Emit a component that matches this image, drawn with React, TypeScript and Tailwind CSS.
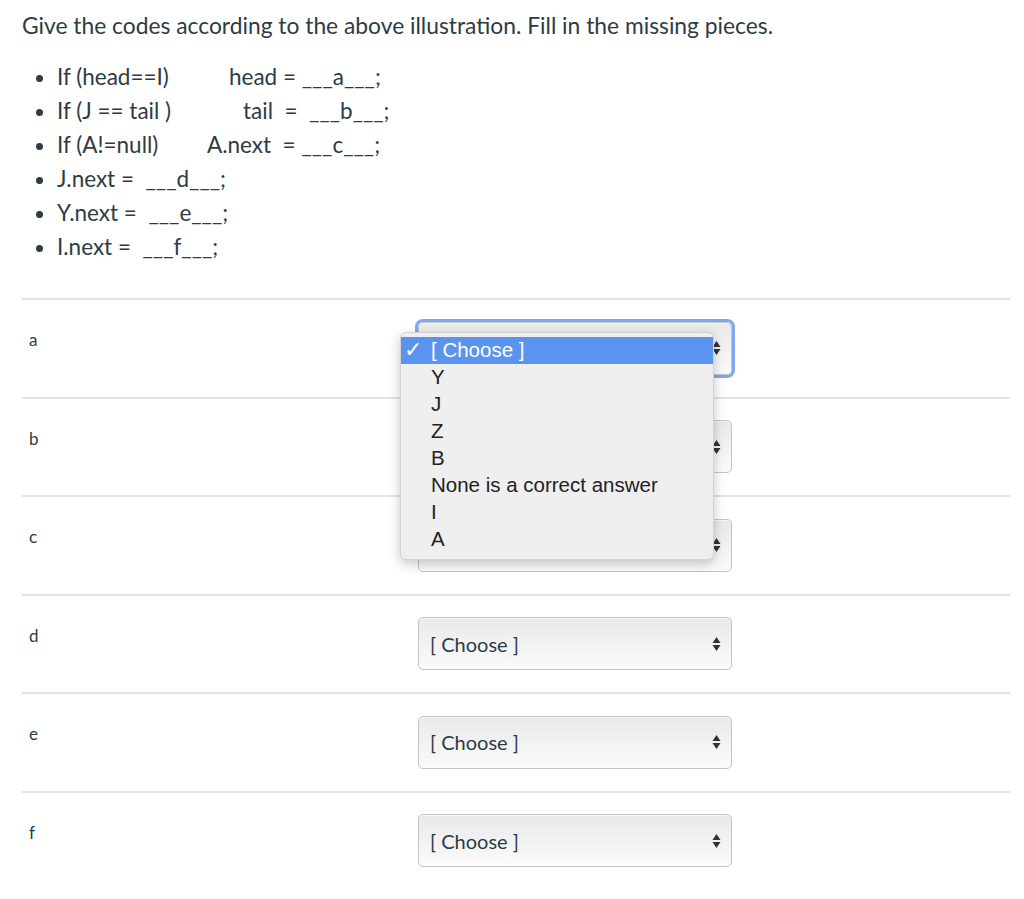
import React from "react";

const lato = { fontFamily: "Lato, 'Open Sans', sans-serif" };

const rows = ["a", "b", "c", "d", "e", "f"];

const options = ["Y", "J", "Z", "B", "None is a correct answer", "I", "A"];

const Arrows: React.FC = () => (
  <svg width="9" height="16" viewBox="0 0 9 16" className="shrink-0">
    <path d="M4.5 1 L8.5 7 L0.5 7 Z" fill="#2f3338" />
    <path d="M4.5 15 L8.5 9 L0.5 9 Z" fill="#2f3338" />
  </svg>
);

const Select: React.FC<{ focused?: boolean }> = ({ focused }) => (
  <div
    className={
      "w-[314px] h-[53px] rounded-[5px] border border-[#c4c4c4] bg-gradient-to-b from-[#e9e9e9] to-[#fbfbfb] flex items-center justify-between pl-[11px] pr-[10px] shadow-[inset_0_1px_0_#f7f7f7] " +
      (focused ? "ring-[3px] ring-[#7ea9ee]" : "")
    }
  >
    <span className="text-[20px] text-[#2d3b45]" style={lato}>
      [ Choose ]
    </span>
    <Arrows />
  </div>
);

const Dropdown: React.FC = () => (
  <div
    className="absolute left-[-18px] top-[10px] w-[314px] rounded-[6px] bg-[#efefef] border border-[#d3d3d3] shadow-[0_4px_12px_rgba(0,0,0,0.22)] pt-[4px] pb-[6px] z-10"
    style={{ fontFamily: "'Liberation Sans', 'DejaVu Sans', sans-serif" }}
  >
    <div className="h-[27px] bg-[#5a94ee] flex items-center text-white text-[20.5px]">
      <span className="w-[30px] pl-[3px] text-[22px] leading-none" style={{ fontFamily: "'DejaVu Sans', sans-serif" }}>
        ✓
      </span>
      <span>[ Choose ]</span>
    </div>
    {options.map((o) => (
      <div key={o} className="h-[27px] flex items-center pl-[30px] text-[20.5px] text-[#222]">
        {o}
      </div>
    ))}
  </div>
);

export default function App() {
  return (
    <div className="bg-white min-h-[899px] text-[#2d3b45]" style={lato}>
      <div className="pl-[22px] pr-[14px] pt-[10px]">
        <p className="text-[22.8px] leading-[30px]">
          Give the codes according to the above illustration. Fill in the missing pieces.
        </p>
        <ul className="mt-[20px] pl-[35px] list-disc text-[22.5px] leading-[34px] whitespace-pre">
          <li>
            <span className="inline-block w-[172px]">If (head==I)</span>head = ___a___;
          </li>
          <li>
            <span className="inline-block w-[186px]">If (J == tail )</span>tail  =  ___b___;
          </li>
          <li>
            <span className="inline-block w-[150px]">If (A!=null)</span>A.next  = ___c___;
          </li>
          <li>J.next =  ___d___;</li>
          <li>Y.next =  ___e___;</li>
          <li>I.next =  ___f___;</li>
        </ul>

        <div className="mt-[34px] w-[988px]">
          {rows.map((r, i) => (
            <div key={r} className="flex items-center h-[98.5px] border-t-2 border-[#e4e4e4]">
              <div className="w-[396px] self-start pt-[27px] pl-[7px] text-[17px]">{r}</div>
              <div className="relative">
                <Select focused={i === 0} />
                {i === 0 && <Dropdown />}
              </div>
            </div>
          ))}
        </div>
      </div>
    </div>
  );
}
